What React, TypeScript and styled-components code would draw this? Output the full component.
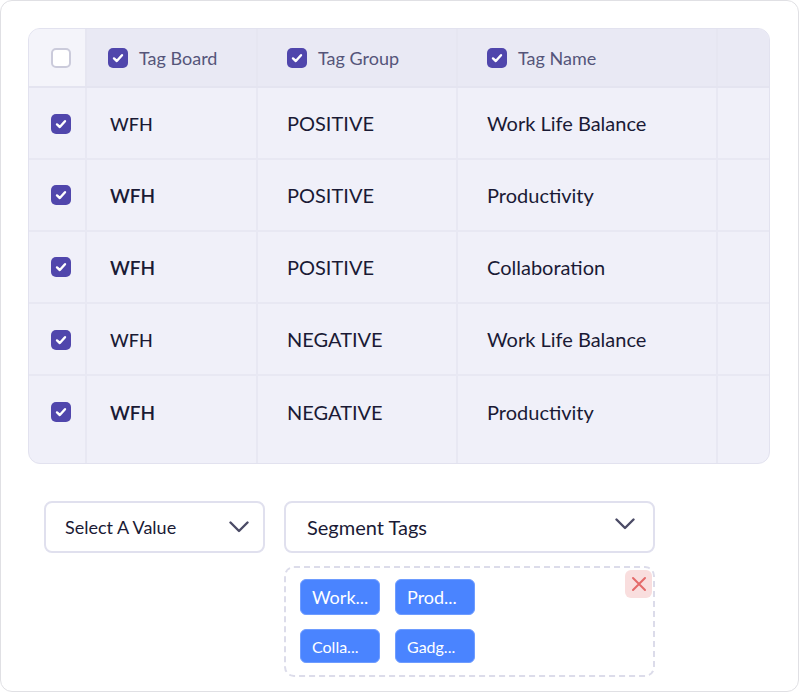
import React from "react";
import styled, { createGlobalStyle } from "styled-components";

const Global = createGlobalStyle`
  html, body { margin: 0; padding: 0; background: #ffffff; }
  body { font-family: Lato, "Noto Sans", sans-serif; }
  * { box-sizing: border-box; }
`;

const Card = styled.div`
  width: 799px;
  height: 692px;
  border: 1px solid #e0e0e4;
  border-radius: 12px;
  padding: 27px 28px 0 27px;
  background: #fff;
`;

const Table = styled.div`
  width: 742px;
  border: 1px solid #e2e2ef;
  border-radius: 12px;
  background: #f0f0f9;
  overflow: hidden;
`;

const cols = "58px 171px 200px 260px 51px";

const HeadRow = styled.div`
  display: grid;
  grid-template-columns: ${cols};
  height: 59px;
  background: #e9e9f4;
  border-bottom: 2px solid #e4e4f0;
`;

const HeadCell = styled.div<{ $pad: number; $light?: boolean; $noBorder?: boolean }>`
  display: flex;
  align-items: center;
  gap: 11px;
  padding-left: ${(p) => p.$pad}px;
  background: ${(p) => (p.$light ? "#f4f4fa" : "transparent")};
  border-right: ${(p) => (p.$noBorder ? "none" : "2px solid #e6e6f1")};
  font-size: 18px;
  color: #55557a;
`;

const Row = styled.div<{ $last?: boolean }>`
  display: grid;
  grid-template-columns: ${cols};
  height: ${(p) => (p.$last ? 87 : 72)}px;
  border-bottom: ${(p) => (p.$last ? "none" : "2px solid #e8e8f3")};
`;

const Cell = styled.div<{ $pad: number; $noBorder?: boolean; $last?: boolean; $size?: number; $weight?: number; $shift?: number }>`
  display: flex;
  align-items: center;
  padding-left: ${(p) => p.$pad}px;
  padding-top: ${(p) => p.$shift ?? 0}px;
  padding-bottom: ${(p) => (p.$last ? 15 : 0)}px;
  border-right: ${(p) => (p.$noBorder ? "none" : "2px solid #e8e8f3")};
  font-size: ${(p) => p.$size ?? 20}px;
  font-weight: ${(p) => p.$weight ?? 400};
  color: #1a1a35;
`;

const Box = styled.span<{ $checked?: boolean }>`
  width: 20px;
  height: 20px;
  border-radius: 5px;
  display: inline-flex;
  align-items: center;
  justify-content: center;
  flex-shrink: 0;
  background: ${(p) => (p.$checked ? "#5046ac" : "#ffffff")};
  border: ${(p) => (p.$checked ? "none" : "2px solid #cbcbdb")};
`;

const Check = ({ checked = true }: { checked?: boolean }) => (
  <Box $checked={checked}>
    {checked && (
      <svg width="14" height="14" viewBox="0 0 14 14">
        <path d="M3 7.4 L5.8 10 L11 4.2" fill="none" stroke="#fff" strokeWidth="2.4" strokeLinecap="round" strokeLinejoin="round" />
      </svg>
    )}
  </Box>
);

const Controls = styled.div`
  display: flex;
  gap: 19px;
  margin-top: 37px;
  padding-left: 16px;
  align-items: flex-start;
`;

const Select = styled.div<{ $w: number; $size: number; $pad: number; $padR: number }>`
  width: ${(p) => p.$w}px;
  height: 52px;
  border: 2px solid #e0e0ee;
  border-radius: 8px;
  display: flex;
  align-items: center;
  justify-content: space-between;
  padding: 0 ${(p) => p.$padR}px 0 ${(p) => p.$pad}px;
  font-size: ${(p) => p.$size}px;
  color: #1a1a35;
  background: #fff;
`;

const Chevron = styled.svg<{ $up?: number }>`
  margin-bottom: ${(p) => p.$up ?? 0}px;
`;

const SegmentCol = styled.div`
  display: flex;
  flex-direction: column;
  gap: 13px;
  width: 371px;
`;

const TagBox = styled.div`
  position: relative;
  height: 111px;
  border: 2px dashed #dcdcea;
  border-radius: 10px;
  padding: 11px 14px;
  display: grid;
  grid-template-columns: 80px 80px;
  grid-auto-rows: min-content;
  column-gap: 15px;
  row-gap: 14px;
`;

const Chip = styled.div<{ $h: number; $size: number }>`
  height: ${(p) => p.$h}px;
  border-radius: 6px;
  background: #4a84ff;
  border: 1px solid #6e9cff;
  color: #fff;
  font-size: ${(p) => p.$size}px;
  display: flex;
  align-items: center;
  padding-left: 11px;
`;

const CloseBtn = styled.div`
  position: absolute;
  top: 2px;
  right: 1px;
  width: 27px;
  height: 28px;
  border-radius: 6px;
  background: #f9dede;
  display: flex;
  align-items: center;
  justify-content: center;
`;

const rows = [
  { board: "WFH", group: "POSITIVE", name: "Work Life Balance", small: true },
  { board: "WFH", group: "POSITIVE", name: "Productivity", small: false },
  { board: "WFH", group: "POSITIVE", name: "Collaboration", small: false },
  { board: "WFH", group: "NEGATIVE", name: "Work Life Balance", small: true },
  { board: "WFH", group: "NEGATIVE", name: "Productivity", small: false },
];

const ChevronIcon = ({ up }: { up?: number }) => (
  <Chevron $up={up} width="20" height="12" viewBox="0 0 20 12">
    <path d="M1.5 1.5 L10 10 L18.5 1.5" fill="none" stroke="#4b4b66" strokeWidth="2.4" strokeLinecap="round" strokeLinejoin="round" />
  </Chevron>
);

export default function App() {
  return (
    <>
      <Global />
      <Card>
        <Table>
          <HeadRow>
            <HeadCell $pad={22} $light>
              <Check checked={false} />
            </HeadCell>
            <HeadCell $pad={21}>
              <Check />
              Tag Board
            </HeadCell>
            <HeadCell $pad={29}>
              <Check />
              Tag Group
            </HeadCell>
            <HeadCell $pad={29}>
              <Check />
              Tag Name
            </HeadCell>
            <HeadCell $pad={0} $noBorder />
          </HeadRow>
          {rows.map((r, i) => {
            const last = i === rows.length - 1;
            return (
              <Row key={i} $last={last}>
                <Cell $pad={22} $last={last} $shift={r.small ? 2 : 0}>
                  <Check />
                </Cell>
                <Cell $pad={23} $last={last} $size={r.small ? 18 : 19} $weight={r.small ? 500 : 600} $shift={r.small ? 2 : 0}>
                  {r.board}
                </Cell>
                <Cell $pad={29} $last={last}>{r.group}</Cell>
                <Cell $pad={29} $last={last}>{r.name}</Cell>
                <Cell $pad={0} $noBorder $last={last} />
              </Row>
            );
          })}
        </Table>
        <Controls>
          <Select $w={221} $size={18} $pad={19} $padR={14}>
            Select A Value
            <ChevronIcon />
          </Select>
          <SegmentCol>
            <Select $w={371} $size={20} $pad={21} $padR={18}>
              Segment Tags
              <ChevronIcon up={6} />
            </Select>
            <TagBox>
              <Chip $h={36} $size={18}>Work...</Chip>
              <Chip $h={36} $size={18}>Prod...</Chip>
              <Chip $h={34} $size={16}>Colla...</Chip>
              <Chip $h={34} $size={16}>Gadg...</Chip>
              <CloseBtn>
                <svg width="16" height="16" viewBox="0 0 16 16">
                  <path d="M2 2 L14 14 M14 2 L2 14" stroke="#e46a6a" strokeWidth="2" strokeLinecap="round" />
                </svg>
              </CloseBtn>
            </TagBox>
          </SegmentCol>
        </Controls>
      </Card>
    </>
  );
}
